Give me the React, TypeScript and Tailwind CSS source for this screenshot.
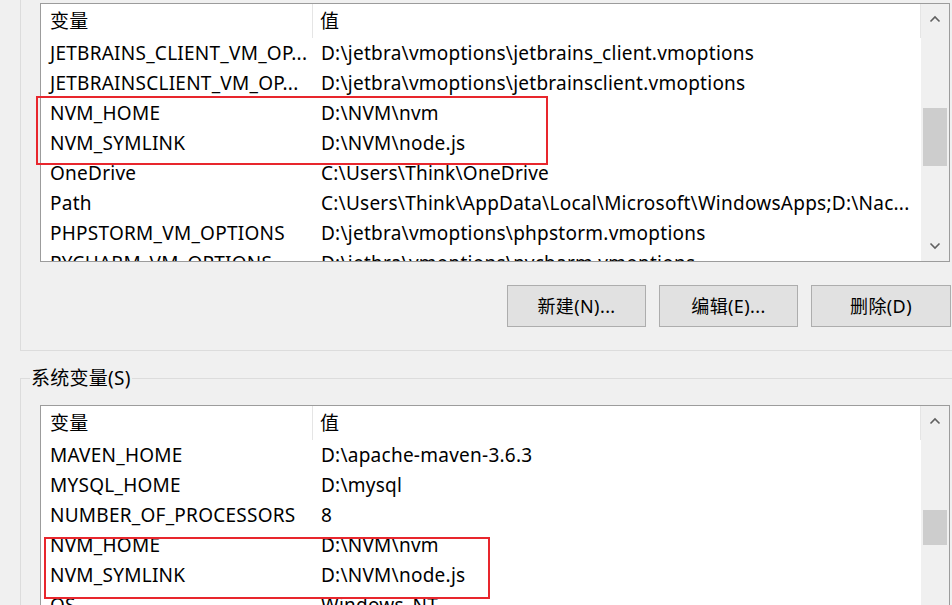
import React from 'react';

type Row = [string, string];

const userRows: Row[] = [
  ['JETBRAINS_CLIENT_VM_OP...', 'D:\\jetbra\\vmoptions\\jetbrains_client.vmoptions'],
  ['JETBRAINSCLIENT_VM_OP...', 'D:\\jetbra\\vmoptions\\jetbrainsclient.vmoptions'],
  ['NVM_HOME', 'D:\\NVM\\nvm'],
  ['NVM_SYMLINK', 'D:\\NVM\\node.js'],
  ['OneDrive', 'C:\\Users\\Think\\OneDrive'],
  ['Path', 'C:\\Users\\Think\\AppData\\Local\\Microsoft\\WindowsApps;D:\\Nac...'],
  ['PHPSTORM_VM_OPTIONS', 'D:\\jetbra\\vmoptions\\phpstorm.vmoptions'],
  ['PYCHARM_VM_OPTIONS', 'D:\\jetbra\\vmoptions\\pycharm.vmoptions'],
];

const systemRows: Row[] = [
  ['MAVEN_HOME', 'D:\\apache-maven-3.6.3'],
  ['MYSQL_HOME', 'D:\\mysql'],
  ['NUMBER_OF_PROCESSORS', '8'],
  ['NVM_HOME', 'D:\\NVM\\nvm'],
  ['NVM_SYMLINK', 'D:\\NVM\\node.js'],
  ['OS', 'Windows_NT'],
];

function Chevron({ up }: { up: boolean }) {
  return (
    <svg width="12" height="8" viewBox="0 0 12 8">
      <polyline
        points={up ? '1.5,6.5 6,2 10.5,6.5' : '1.5,1.5 6,6 10.5,1.5'}
        fill="none"
        stroke="#606060"
        strokeWidth="1.6"
      />
    </svg>
  );
}

function VarList({
  rows,
  height,
  thumbTop,
  thumbHeight,
  showDown,
  mark,
}: {
  rows: Row[];
  height: string;
  thumbTop: string;
  thumbHeight: string;
  showDown: boolean;
  mark: React.ReactNode;
}) {
  return (
    <div className={`relative flex w-[910px] ${height} border border-[#9c9c9c] bg-white`}>
      <div className="flex min-w-0 flex-1 flex-col overflow-hidden">
        <div className="flex h-[34px] shrink-0 items-center">
          <div className="flex h-full w-[272px] shrink-0 items-center border-r border-[#e5e5e5] pl-[9px]">变量</div>
          <div className="flex h-full flex-1 items-center border-r border-[#e5e5e5] pl-[7px]">值</div>
        </div>
        {rows.map(([name, value]) => (
          <div key={name} className="flex h-[30px] shrink-0 items-center whitespace-nowrap">
            <div className="w-[272px] shrink-0 pl-[9px]">{name}</div>
            <div className="pl-[8px]">{value}</div>
          </div>
        ))}
      </div>
      <div className="flex w-[28px] shrink-0 flex-col items-center bg-[#f0f0f0]">
        <div className="flex h-[30px] w-full items-center justify-center">
          <Chevron up />
        </div>
        <div className={`${thumbTop} ${thumbHeight} w-[24px] bg-[#cdcdcd]`} />
        {showDown && (
          <div className="mt-auto flex h-[30px] w-full items-center justify-center">
            <Chevron up={false} />
          </div>
        )}
      </div>
      {mark}
    </div>
  );
}

function Btn({ children, className }: { children: React.ReactNode; className: string }) {
  return (
    <button
      type="button"
      className={`flex h-[42px] items-center justify-center border border-[#adadad] bg-[#e1e1e1] text-[18px] tracking-[0.4px] text-black ${className}`}
    >
      {children}
    </button>
  );
}

export default function App() {
  return (
    <div
      className="h-[605px] w-[952px] overflow-hidden bg-[#f0f0f0] text-[19px] leading-none tracking-[0.25px] text-black"
      style={{ fontFamily: '"Noto Sans", "Noto Sans CJK SC", sans-serif' }}
    >
      {/* 用户变量 */}
      <div className="ml-[20px] h-[351px] border-b border-l border-[#dcdcdc] pl-[19px] pt-[3px]">
        <VarList
          rows={userRows}
          height="h-[259px]"
          thumbTop="mt-[74px]"
          thumbHeight="h-[58px]"
          showDown
          mark={
            <div className="pointer-events-none absolute left-[-5px] top-[92px] h-[69px] w-[512px] border-2 border-[#e8262d]" />
          }
        />
        <div className="mt-[23px] flex justify-end gap-[13px] pr-[1px]">
          <Btn className="w-[139px]">新建(N)...</Btn>
          <Btn className="w-[139px]">编辑(E)...</Btn>
          <Btn className="w-[140px]">删除(D)</Btn>
        </div>
      </div>

      {/* 系统变量 */}
      <div className="relative ml-[20px] mt-[27px] h-[300px] border-l border-t border-[#dcdcdc] pl-[19px] pt-[26px]">
        <span className="absolute left-[9px] top-[-10px] bg-[#f0f0f0] px-[1px]">系统变量(S)</span>
        <VarList
          rows={systemRows}
          height="h-[240px]"
          thumbTop="mt-[74px]"
          thumbHeight="h-[35px]"
          showDown={false}
          mark={
            <div className="pointer-events-none absolute left-[3px] top-[131px] h-[62px] w-[446px] border-2 border-[#e8262d]" />
          }
        />
      </div>
    </div>
  );
}
